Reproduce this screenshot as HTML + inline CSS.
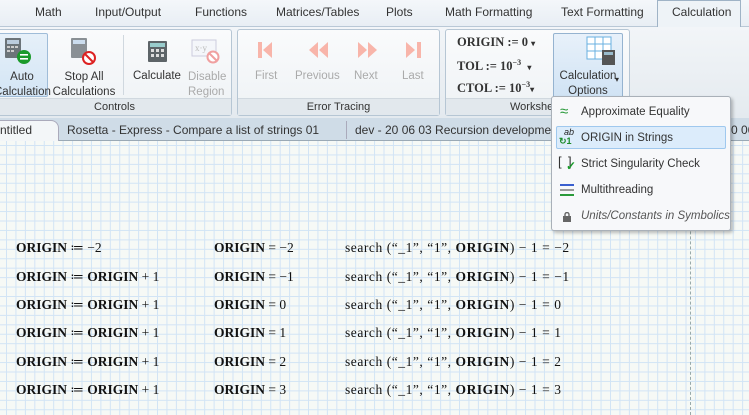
<!DOCTYPE html>
<html><head><style>
*{margin:0;padding:0;box-sizing:border-box}
body{width:749px;height:415px;overflow:hidden;position:relative;font-family:"Liberation Sans",sans-serif;font-size:11px;color:#333;background:#f6f9f6}
.abs{position:absolute;white-space:nowrap}
#tabs{position:absolute;left:0;top:0;width:749px;height:27px;background:linear-gradient(#f4f7fa,#e8eef4);border-bottom:1px solid #b9c8d6}
#tabs span{position:absolute;top:5px;font-size:12px;color:#333}
#calc{position:absolute;left:657px;top:0;width:84px;height:28px;background:#eef3f7;border:1px solid #9fb3c6;border-bottom:none}
#ribbon{position:absolute;left:0;top:27px;width:749px;height:91px;background:linear-gradient(#f2f5f8,#e4eaef)}
.grp{position:absolute;top:2px;height:87px;border:1px solid #b6c6d4;border-radius:3px;background:linear-gradient(#fafbfc,#eef2f5)}
.gl{position:absolute;bottom:0;left:0;right:0;height:17px;background:#e2e8ed;border-top:1px solid #d0d8df;text-align:center;font-size:11px;line-height:16px;color:#333}
.lbl{position:absolute;text-align:center;font-size:11.5px;line-height:15px;color:#333}
.dis{color:#aaa}
#doctabs{position:absolute;left:0;top:118px;width:749px;height:23px;background:#cfdce7;border-bottom:1px solid #9aa9b5}
#grid{position:absolute;left:0;top:141px;width:749px;height:274px;background-color:#f6f9f6;background-image:linear-gradient(90deg,#d2e4f5 1px,transparent 1px),linear-gradient(#d2e4f5 1px,transparent 1px);background-size:9.45px 9.45px;background-position:6px 4px}
.m{position:absolute;font-family:"Liberation Serif",serif;font-size:13.5px;white-space:nowrap;color:#111}
.m b{font-weight:bold}
.c3{letter-spacing:0.55px}
#menu{position:absolute;left:551px;top:96px;width:180px;height:135px;background:#f7f8fa;border:1px solid #a9b0b8;border-radius:3px;box-shadow:2px 2px 3px rgba(0,0,0,.25)}
.mi{position:absolute;left:29px;font-size:11.5px;color:#333}
.ws{position:absolute;font-family:"Liberation Serif",serif;font-weight:bold;font-size:12.5px;color:#333}
</style></head><body>
<div id="tabs">
<span style="left:35px">Math</span><span style="left:95px">Input/Output</span><span style="left:195px">Functions</span><span style="left:276px">Matrices/Tables</span><span style="left:386px">Plots</span><span style="left:445px">Math Formatting</span><span style="left:561px">Text Formatting</span>
</div>
<div id="calc"><span class="abs" style="left:14px;top:4px;font-size:12px">Calculation</span></div>
<div id="ribbon">
 <div class="grp" style="left:-3px;width:235px">
  <div style="position:absolute;left:0;top:3px;width:50px;height:64px;background:linear-gradient(#e6f0f9,#d3e5f5);border:1px solid #9fbcd8;border-radius:2px"></div>
  <svg class="abs" style="left:6px;top:7px" width="28" height="30"><rect x="1" y="1" width="16" height="20" rx="1" fill="#6c7479"/><rect x="3" y="3" width="12" height="4" fill="#bcd"/><g fill="#ccc"><rect x="3" y="9" width="3" height="2"/><rect x="7" y="9" width="3" height="2"/><rect x="11" y="9" width="3" height="2"/><rect x="3" y="13" width="3" height="2"/><rect x="7" y="13" width="3" height="2"/></g><circle cx="20" cy="20" r="7" fill="#1a9a2a"/><rect x="16" y="17" width="8" height="1.6" fill="#fff"/><rect x="16" y="21" width="8" height="1.6" fill="#fff"/></svg>
  <div class="lbl" style="left:-4px;top:40px;width:56px">Auto<br>Calculation</div>
  <svg class="abs" style="left:72px;top:7px" width="28" height="30"><rect x="1" y="1" width="16" height="20" rx="1" fill="#8a9095"/><rect x="3" y="3" width="12" height="4" fill="#cde"/><circle cx="19" cy="21" r="6" fill="#fff" stroke="#d22" stroke-width="2"/><line x1="15" y1="17" x2="23" y2="25" stroke="#d22" stroke-width="2"/></svg>
  <div class="lbl" style="left:52px;top:40px;width:68px">Stop All<br>Calculations</div>
  <div style="position:absolute;left:125px;top:5px;width:1px;height:60px;background:#d0d8df"></div>
  <svg class="abs" style="left:150px;top:11px" width="20" height="22"><rect x="0" y="0" width="19" height="21" rx="1" fill="#5d6468"/><rect x="2" y="2" width="15" height="4" fill="#9cc"/><g fill="#ddd"><rect x="3" y="8" width="3" height="3"/><rect x="8" y="8" width="3" height="3"/><rect x="13" y="8" width="3" height="3"/><rect x="3" y="13" width="3" height="3"/><rect x="8" y="13" width="3" height="3"/><rect x="13" y="13" width="3" height="3"/></g></svg>
  <div class="lbl" style="left:135px;top:39px">Calculate</div>
  <svg class="abs" style="left:193px;top:9px" width="30" height="26"><rect x="1" y="1" width="24" height="16" fill="#f4f6fa" stroke="#ccd"/><text x="4" y="12" font-size="9" fill="#bbb" font-family="Liberation Serif">x·y</text><circle cx="22" cy="18" r="5.5" fill="#fff" stroke="#f0a0a0" stroke-width="2"/><line x1="18" y1="14" x2="26" y2="22" stroke="#f0a0a0" stroke-width="2"/></svg>
  <div class="lbl dis" style="left:190px;top:40px;width:36px">Disable<br>Region</div>
  <div class="gl">Controls</div>
 </div>
 <div class="grp" style="left:237px;width:203px">
  <svg class="abs" style="left:20px;top:12px" width="20" height="16"><rect x="0" y="0" width="4" height="16" fill="#f8b5aa"/><path d="M14 0 L5 8 L14 16Z" fill="#f8b5aa"/></svg>
  <svg class="abs" style="left:70px;top:12px" width="22" height="16"><path d="M10 0L1 8L10 16ZM20 0L11 8L20 16Z" fill="#f8b5aa"/></svg>
  <svg class="abs" style="left:119px;top:12px" width="22" height="16"><path d="M1 0L10 8L1 16ZM11 0L20 8L11 16Z" fill="#f8b5aa"/></svg>
  <svg class="abs" style="left:167px;top:12px" width="20" height="16"><path d="M1 0L10 8L1 16Z" fill="#f8b5aa"/><rect x="12" y="0" width="4" height="16" fill="#f8b5aa"/></svg>
  <div class="lbl dis" style="left:17px;top:39px">First</div>
  <div class="lbl dis" style="left:57px;top:39px">Previous</div>
  <div class="lbl dis" style="left:116px;top:39px">Next</div>
  <div class="lbl dis" style="left:164px;top:39px">Last</div>
  <div class="gl">Error Tracing</div>
 </div>
 <div class="grp" style="left:445px;width:185px">
  <div class="ws" style="left:11px;top:5px">ORIGIN := 0 <span style="font-size:8px">▾</span></div>
  <div class="ws" style="left:11px;top:28px">TOL := 10<sup style="font-size:8px">−3</sup> &nbsp;<span style="font-size:8px">▾</span></div>
  <div class="ws" style="left:11px;top:50px">CTOL := 10<sup style="font-size:8px">−3</sup><span style="font-size:8px">▾</span></div>
  <div style="position:absolute;left:107px;top:3px;width:70px;height:68px;background:linear-gradient(#e8f1fa,#cfe2f4);border:1px solid #95b3d0;border-radius:2px"></div>
  <svg class="abs" style="left:140px;top:6px" width="32" height="30"><g stroke="#6ab0e0" fill="#fff"><rect x="1" y="1" width="24" height="22"/></g><g stroke="#6ab0e0"><line x1="9" y1="1" x2="9" y2="23"/><line x1="17" y1="1" x2="17" y2="23"/><line x1="1" y1="8" x2="25" y2="8"/><line x1="1" y1="15" x2="25" y2="15"/></g><rect x="16" y="14" width="13" height="15" fill="#555"/><rect x="18" y="16" width="9" height="3" fill="#9bc"/></svg>
  <div class="lbl" style="left:111px;top:39px;width:62px">Calculation<br>Options</div>
  <span class="abs" style="left:169px;top:45px;font-size:8px">▾</span>
  <div class="gl" style="text-align:left;padding-left:64px">Worksheet S</div>
 </div>
</div>
<div id="doctabs">
 <div style="position:absolute;left:-5px;top:2px;width:64px;height:22px;background:#f3f6f8;border:1px solid #aab;border-bottom:none;border-radius:3px 8px 0 0"></div>
 <span class="abs" style="left:0;top:5px;font-size:12px">ntitled</span>
 <span class="abs" style="left:67px;top:5px;font-size:12px">Rosetta - Express - Compare a list of strings 01</span>
 <div style="position:absolute;left:346px;top:3px;width:1px;height:18px;background:#aab"></div>
 <span class="abs" style="left:355px;top:5px;font-size:12px">dev - 20 06 03 Recursion developme</span>
 <span class="abs" style="left:731px;top:5px;font-size:12px">0 06</span>
</div>
<div id="grid"></div>
<div style="position:absolute;left:690px;top:141px;height:274px;border-left:1px dashed #9aa"></div>
<div class="m" style="left:16px;top:240px"><b>ORIGIN</b> ≔ −2</div>
<div class="m" style="left:16px;top:269px"><b>ORIGIN</b> ≔ <b>ORIGIN</b> + 1</div>
<div class="m" style="left:16px;top:297px"><b>ORIGIN</b> ≔ <b>ORIGIN</b> + 1</div>
<div class="m" style="left:16px;top:325px"><b>ORIGIN</b> ≔ <b>ORIGIN</b> + 1</div>
<div class="m" style="left:16px;top:354px"><b>ORIGIN</b> ≔ <b>ORIGIN</b> + 1</div>
<div class="m" style="left:16px;top:382px"><b>ORIGIN</b> ≔ <b>ORIGIN</b> + 1</div>
<div class="m" style="left:214px;top:240px"><b>ORIGIN</b> = −2</div>
<div class="m" style="left:214px;top:269px"><b>ORIGIN</b> = −1</div>
<div class="m" style="left:214px;top:297px"><b>ORIGIN</b> = 0</div>
<div class="m" style="left:214px;top:325px"><b>ORIGIN</b> = 1</div>
<div class="m" style="left:214px;top:354px"><b>ORIGIN</b> = 2</div>
<div class="m" style="left:214px;top:382px"><b>ORIGIN</b> = 3</div>
<div class="m c3" style="left:345px;top:240px">search (“_1”, “1”, <b>ORIGIN</b>) − 1 = −2</div>
<div class="m c3" style="left:345px;top:269px">search (“_1”, “1”, <b>ORIGIN</b>) − 1 = −1</div>
<div class="m c3" style="left:345px;top:297px">search (“_1”, “1”, <b>ORIGIN</b>) − 1 = 0</div>
<div class="m c3" style="left:345px;top:325px">search (“_1”, “1”, <b>ORIGIN</b>) − 1 = 1</div>
<div class="m c3" style="left:345px;top:354px">search (“_1”, “1”, <b>ORIGIN</b>) − 1 = 2</div>
<div class="m c3" style="left:345px;top:382px">search (“_1”, “1”, <b>ORIGIN</b>) − 1 = 3</div>
<div id="menu">
 <span class="abs" style="left:8px;top:6px;color:#2a9a3a;font-size:15px">≈</span>
 <span class="mi" style="top:9px">Approximate Equality</span>
 <div style="position:absolute;left:4px;top:29px;width:170px;height:23px;background:#dcecfb;border:1px solid #9fc8ee;border-radius:2px"></div>
 <span class="abs" style="left:7px;top:30px;font-size:9px;font-style:italic;color:#222">&nbsp;&nbsp;ab</span>
 <span class="abs" style="left:7px;top:39px;font-size:9px;color:#1a8a2a;font-weight:bold">↻1</span>
 <span class="mi" style="top:35px">ORIGIN in Strings</span>
 <span class="abs" style="left:6px;top:57px;font-size:13px;color:#333">[</span><span class="abs" style="left:16px;top:57px;font-size:13px;color:#333">]</span><span class="abs" style="left:14px;top:62px;color:#1a9a2a;font-size:12px;font-weight:bold">✓</span>
 <span class="mi" style="top:61px">Strict Singularity Check</span>
 <svg class="abs" style="left:7px;top:86px" width="16" height="14"><line x1="1" y1="2" x2="15" y2="2" stroke="#3a5fcf" stroke-width="2"/><line x1="1" y1="7" x2="15" y2="7" stroke="#999" stroke-width="2"/><line x1="1" y1="12" x2="15" y2="12" stroke="#2a9a3a" stroke-width="2"/></svg>
 <span class="mi" style="top:87px">Multithreading</span>
 <svg class="abs" style="left:10px;top:115px" width="10" height="10"><rect x="1" y="4" width="8" height="6" fill="#666"/><path d="M3 4V2.5a2 2 0 0 1 4 0V4" stroke="#666" fill="none" stroke-width="1.4"/></svg>
 <span class="mi" style="top:113px;font-style:italic;color:#555">Units/Constants in Symbolics</span>
</div>
</body></html>
